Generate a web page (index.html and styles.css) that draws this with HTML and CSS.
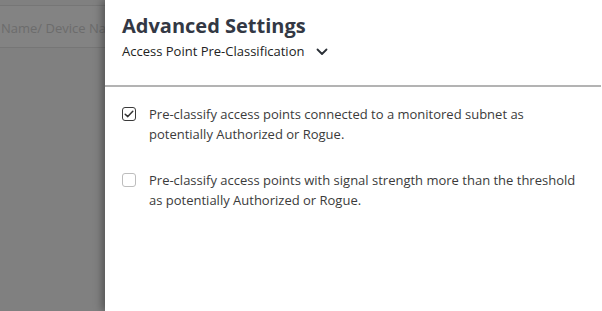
FILE: index.html
```html
<!DOCTYPE html>
<html>
<head>
<meta charset="utf-8">
<link rel="stylesheet" href="styles.css">
</head>
<body>
<div class="page">
  <div class="backdrop">
    <div class="search">
      <span class="placeholder">Name/ Device Name</span>
    </div>
  </div>
  <div class="panel">
    <div class="head">
      <h1 class="title">Advanced Settings</h1>
      <div class="subtitle">
        <span>Access Point Pre-Classification</span>
        <svg class="chev" width="12" height="8" viewBox="0 0 12 8"><path d="M1.5 1.5 L6 6 L10.5 1.5" fill="none" stroke="#2a2f36" stroke-width="1.8" stroke-linecap="round" stroke-linejoin="round"/></svg>
      </div>
    </div>
    <div class="divider"></div>
    <div class="options">
      <label class="option">
        <span class="box checked">
          <svg width="10" height="8" viewBox="0 0 10 8"><path d="M1.2 4.2 L3.8 6.6 L8.8 1.3" fill="none" stroke="#333" stroke-width="1.5" stroke-linecap="round" stroke-linejoin="round"/></svg>
        </span>
        <span class="text">Pre-classify access points connected to a monitored subnet as<br>potentially Authorized or Rogue.</span>
      </label>
      <label class="option">
        <span class="box"></span>
        <span class="text">Pre-classify access points with signal strength more than the threshold<br>as potentially Authorized or Rogue.</span>
      </label>
    </div>
  </div>
</div>
</body>
</html>
```
FILE: styles.css
```css
html, body {
  margin: 0;
  padding: 0;
  width: 602px;
  height: 311px;
  overflow: hidden;
  font-family: "Open Sans", "Noto Sans", sans-serif;
}
.page {
  display: flex;
  width: 602px;
  height: 311px;
}
.backdrop {
  width: 105px;
  flex: none;
  background: #808080;
  padding-top: 5px;
  box-sizing: border-box;
  overflow: hidden;
}
.search {
  height: 41px;
  border-top: 1px solid #767676;
  border-bottom: 1px solid #767676;
  background: #838383;
  display: flex;
  align-items: center;
  white-space: nowrap;
  padding-left: 1px;
  padding-top: 2px;
  box-sizing: border-box;
  height: 43px;
}
.placeholder {
  font-size: 13px;
  color: #6c6c6c;
}
.panel {
  flex: 1;
  background: #fff;
  box-shadow: -3px 0 8px rgba(0,0,0,0.35);
  position: relative;
}
.head {
  padding: 13px 0 0 17px;
  height: 74px;
  box-sizing: border-box;
}
.title {
  margin: 0;
  font-size: 20px;
  line-height: 26px;
  font-weight: 700;
  color: #333844;
}
.subtitle {
  display: flex;
  align-items: center;
  gap: 12px;
  font-size: 13px;
  line-height: 18px;
  color: #222;
  margin-top: 3px;
}
.chev {
  margin-top: 1px;
}
.divider {
  height: 2px;
  background: #b3b3b3;
  margin-top: 11px;
  margin-right: 1px;
}
.options {
  padding: 17px 0 0 17px;
}
.option {
  display: flex;
  align-items: flex-start;
  gap: 13px;
  margin-bottom: 26px;
}
.box {
  width: 14px;
  height: 14px;
  box-sizing: border-box;
  border: 1.4px solid #bdbdbd;
  border-radius: 3px;
  flex: none;
  margin-top: 3px;
  display: flex;
  align-items: center;
  justify-content: center;
}
.box.checked {
  border-color: #3a3a3a;
}
.text {
  font-size: 13px;
  line-height: 20px;
  color: #3b3b3b;
}
```
